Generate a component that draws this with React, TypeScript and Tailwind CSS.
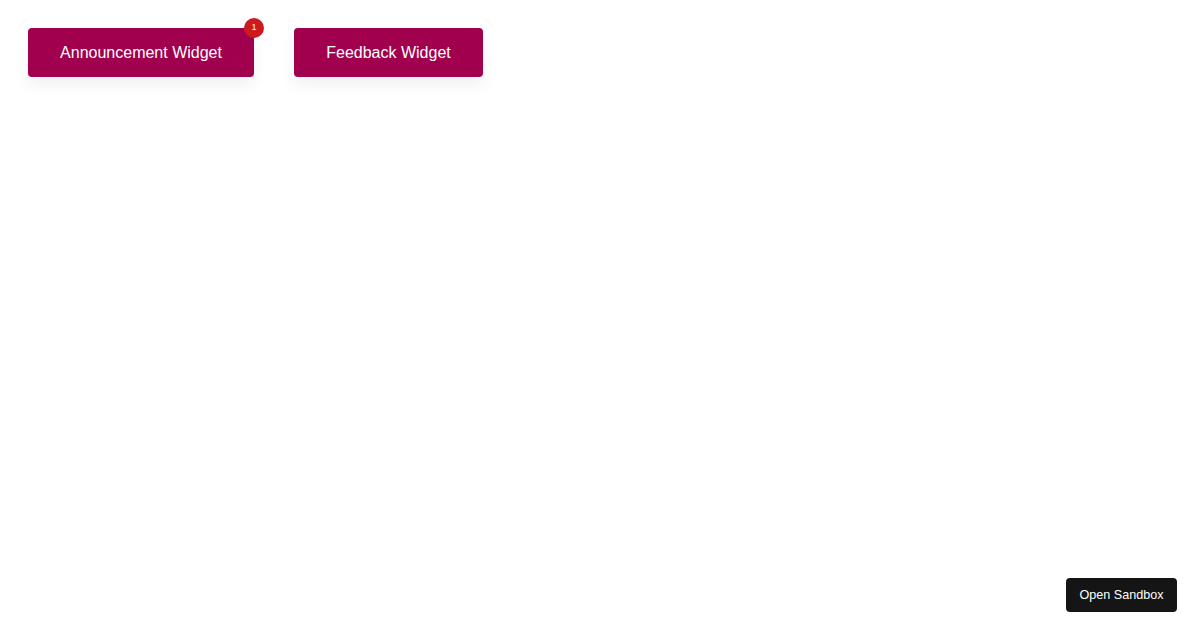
export default function App() {
  return (
    <div className="relative h-[630px] w-full bg-white font-['Liberation_Sans',Arial,sans-serif]">
      <div className="flex gap-10 p-7">
        <div className="relative">
          <button className="h-[49px] w-[226px] rounded bg-[#a1004e] pt-px text-base text-white shadow-[0_8px_16px_rgba(0,0,0,0.06)]">
            Announcement Widget
          </button>
          <span className="absolute -right-[10px] -top-[10px] flex h-5 w-5 items-center justify-center rounded-full bg-[#cc1a1f] text-[9px] text-white">
            1
          </span>
        </div>
        <button className="h-[49px] w-[189px] rounded bg-[#a1004e] pt-px text-base text-white shadow-[0_8px_16px_rgba(0,0,0,0.06)]">
          Feedback Widget
        </button>
      </div>
      <button className="absolute bottom-[18px] right-[23px] h-[34px] w-[111px] rounded bg-[#151515] pt-px text-[12.6px] text-white">
        Open Sandbox
      </button>
    </div>
  );
}
